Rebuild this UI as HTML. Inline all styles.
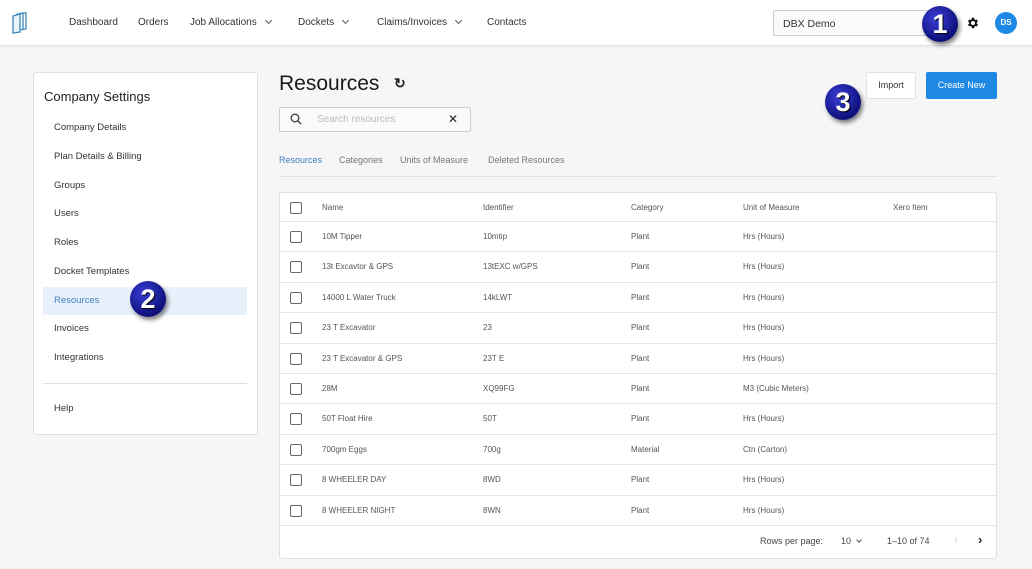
<!DOCTYPE html>
<html><head><meta charset="utf-8"><style>
*{box-sizing:border-box;margin:0;padding:0}
body{width:1032px;height:569px;background:#f6f6f6;font-family:"Liberation Sans",sans-serif;color:#333;position:relative;overflow:hidden}
.abs{position:absolute}
.hdr{left:0;top:0;width:1032px;height:46px;background:#fff;border-bottom:1px solid #e2e2e2;box-shadow:0 1px 3px rgba(0,0,0,.06)}
.nav{top:17px;font-size:10px;color:#333}
.chev{display:inline-block;width:5px;height:5px;border-right:1.2px solid #555;border-bottom:1.2px solid #555;transform:rotate(45deg);margin-left:9px;position:relative;top:-2px}
.badge{width:36px;height:36px;border-radius:50%;background:radial-gradient(circle at 40% 35%,#3b3fd8,#0d0f7a 70%);color:#fff;font-weight:bold;font-size:27px;text-align:center;line-height:37px;box-shadow:2px 3px 4px rgba(0,0,0,.5);text-shadow:1px 1px 1px #000}
.card{left:33px;top:72px;width:225px;height:363px;background:#fff;border:1px solid #e0e0e0;border-radius:3px}
.si{left:54px;font-size:9.5px;color:#333}
.tbl{left:279px;top:192px;width:718px;height:367px;background:#fff;border:1px solid #e0e0e0;border-radius:3px}
.row{left:0;width:716px;height:30.4px;border-bottom:1px solid #e6e6e6;font-size:8px;color:#555}
.row span{position:absolute;top:10px}
.cb{position:absolute;left:10px;top:9px;width:12px;height:12px;border:1.5px solid #666;border-radius:2px}
</style></head><body>
<div class="abs hdr"></div>
<svg class="abs" style="left:11px;top:11px" width="18" height="24" viewBox="0 0 18 24"><path d="M2 5 L9 3 L9 21 L2 22 Z" fill="#eaf4fa" stroke="#3a8ab8" stroke-width="1.3"/><path d="M5 3.5 L12 2 L12 19 M8 2.5 L15 2 L15 18 L9 19" fill="none" stroke="#3a8ab8" stroke-width="1.3"/></svg>
<div class="abs nav" style="left:69px">Dashboard</div>
<div class="abs nav" style="left:138px">Orders</div>
<div class="abs nav" style="left:190px">Job Allocations<span class="chev"></span></div>
<div class="abs nav" style="left:298px">Dockets<span class="chev"></span></div>
<div class="abs nav" style="left:377px">Claims/Invoices<span class="chev"></span></div>
<div class="abs nav" style="left:487px">Contacts</div>
<div class="abs" style="left:773px;top:10px;width:165px;height:26px;border:1px solid #ccc;border-radius:2px;background:#fafafa;font-size:10.5px;padding:7px 9px;color:#333">DBX Demo</div>
<div class="abs badge" style="left:922px;top:6px">1</div>
<svg class="abs" style="left:966px;top:16px" width="14" height="14" viewBox="0 0 24 24"><path fill="#111" d="M19.4 13a7.5 7.5 0 0 0 0-2l2.1-1.6-2-3.5-2.5 1a7 7 0 0 0-1.7-1L15 3h-4l-.4 2.9a7 7 0 0 0-1.7 1l-2.5-1-2 3.5L6.6 11a7.5 7.5 0 0 0 0 2l-2.1 1.6 2 3.5 2.5-1a7 7 0 0 0 1.7 1L11 21h4l.4-2.9a7 7 0 0 0 1.7-1l2.5 1 2-3.5zM13 15.5a3.5 3.5 0 1 1 0-7 3.5 3.5 0 0 1 0 7z" transform="translate(-1 0)"/></svg>
<div class="abs" style="left:995px;top:12px;width:22px;height:22px;border-radius:50%;background:#1e88e5;color:#fff;font-size:8px;font-weight:bold;text-align:center;line-height:22px">DS</div>

<div class="abs card"></div>
<div class="abs" style="left:44px;top:89px;font-size:13px;color:#222">Company Settings</div>
<div class="abs" style="left:43px;top:287px;width:204px;height:28px;background:#e8f1fb"></div>
<div class="abs si" style="top:122px">Company Details</div>
<div class="abs si" style="top:151px">Plan Details &amp; Billing</div>
<div class="abs si" style="top:180px">Groups</div>
<div class="abs si" style="top:208px">Users</div>
<div class="abs si" style="top:237px">Roles</div>
<div class="abs si" style="top:266px">Docket Templates</div>
<div class="abs si" style="top:295px;color:#3f7fc0">Resources</div>
<div class="abs si" style="top:323px">Invoices</div>
<div class="abs si" style="top:352px">Integrations</div>
<div class="abs" style="left:43px;top:383px;width:204px;height:1px;background:#e0e0e0"></div>
<div class="abs si" style="top:403px">Help</div>
<div class="abs badge" style="left:130px;top:281px">2</div>

<div class="abs" style="left:279px;top:72px;font-size:21px;color:#1a1a1a">Resources</div>
<div class="abs" style="left:394px;top:75px;font-size:14px;font-weight:bold;color:#222">↻</div>
<div class="abs" style="left:279px;top:107px;width:192px;height:25px;border:1px solid #ccc;border-radius:2px;background:#fafafa"></div>
<svg class="abs" style="left:290px;top:113px" width="12" height="12"><circle cx="5" cy="5" r="3.8" fill="none" stroke="#444" stroke-width="1.4"/><path d="M8 8 L11 11" stroke="#444" stroke-width="1.5"/></svg>
<div class="abs" style="left:317px;top:114px;font-size:10px;color:#bbb">Search resources</div>
<div class="abs" style="left:448px;top:112px;font-size:12px;color:#222">✕</div>
<div class="abs" style="left:279px;top:155px;font-size:9px;color:#3f7fc0">Resources</div>
<div class="abs" style="left:339px;top:155px;font-size:9px;color:#777">Categories</div>
<div class="abs" style="left:400px;top:155px;font-size:9px;color:#777">Units of Measure</div>
<div class="abs" style="left:488px;top:155px;font-size:9px;color:#777">Deleted Resources</div>
<div class="abs" style="left:279px;top:176px;width:718px;height:1px;background:#e2e2e2"></div>

<div class="abs" style="left:866px;top:72px;width:50px;height:27px;background:#fff;border:1px solid #e2e2e2;border-radius:2px;font-size:9px;text-align:center;line-height:25px">Import</div>
<div class="abs" style="left:926px;top:72px;width:71px;height:27px;background:#1e88e5;border-radius:2px;color:#fff;font-size:9px;text-align:center;line-height:27px">Create New</div>
<div class="abs badge" style="left:825px;top:84px">3</div>

<div class="abs tbl">
<div class="abs row" style="top:0;height:29px"><div class="cb"></div><span style="left:42px">Name</span><span style="left:203px">Identifier</span><span style="left:351px">Category</span><span style="left:463px">Unit of Measure</span><span style="left:613px">Xero Item</span></div>
<div class="abs row" style="top:29px"><div class="cb"></div><span style="left:42px">10M Tipper</span><span style="left:203px">10mtip</span><span style="left:351px">Plant</span><span style="left:463px">Hrs (Hours)</span></div>
<div class="abs row" style="top:59.4px"><div class="cb"></div><span style="left:42px">13t Excavtor &amp; GPS</span><span style="left:203px">13tEXC w/GPS</span><span style="left:351px">Plant</span><span style="left:463px">Hrs (Hours)</span></div>
<div class="abs row" style="top:89.8px"><div class="cb"></div><span style="left:42px">14000 L Water Truck</span><span style="left:203px">14kLWT</span><span style="left:351px">Plant</span><span style="left:463px">Hrs (Hours)</span></div>
<div class="abs row" style="top:120.2px"><div class="cb"></div><span style="left:42px">23 T Excavator</span><span style="left:203px">23</span><span style="left:351px">Plant</span><span style="left:463px">Hrs (Hours)</span></div>
<div class="abs row" style="top:150.6px"><div class="cb"></div><span style="left:42px">23 T Excavator &amp; GPS</span><span style="left:203px">23T E</span><span style="left:351px">Plant</span><span style="left:463px">Hrs (Hours)</span></div>
<div class="abs row" style="top:181px"><div class="cb"></div><span style="left:42px">28M</span><span style="left:203px">XQ99FG</span><span style="left:351px">Plant</span><span style="left:463px">M3 (Cubic Meters)</span></div>
<div class="abs row" style="top:211.4px"><div class="cb"></div><span style="left:42px">50T Float Hire</span><span style="left:203px">50T</span><span style="left:351px">Plant</span><span style="left:463px">Hrs (Hours)</span></div>
<div class="abs row" style="top:241.8px"><div class="cb"></div><span style="left:42px">700gm Eggs</span><span style="left:203px">700g</span><span style="left:351px">Material</span><span style="left:463px">Ctn (Carton)</span></div>
<div class="abs row" style="top:272.2px"><div class="cb"></div><span style="left:42px">8 WHEELER DAY</span><span style="left:203px">8WD</span><span style="left:351px">Plant</span><span style="left:463px">Hrs (Hours)</span></div>
<div class="abs row" style="top:302.6px"><div class="cb"></div><span style="left:42px">8 WHEELER NIGHT</span><span style="left:203px">8WN</span><span style="left:351px">Plant</span><span style="left:463px">Hrs (Hours)</span></div>
</div>
<div class="abs" style="left:760px;top:536px;font-size:9px;color:#444">Rows per page:</div>
<div class="abs" style="left:841px;top:536px;font-size:9px;color:#444">10<span class="chev" style="margin-left:6px;width:4px;height:4px"></span></div>
<div class="abs" style="left:887px;top:536px;font-size:9px;color:#444">1–10 of 74</div>
<div class="abs" style="left:954px;top:534px;font-size:11px;color:#ccc">‹</div>
<div class="abs" style="left:978px;top:532px;font-size:13px;font-weight:bold;color:#222">›</div>
</body></html>
